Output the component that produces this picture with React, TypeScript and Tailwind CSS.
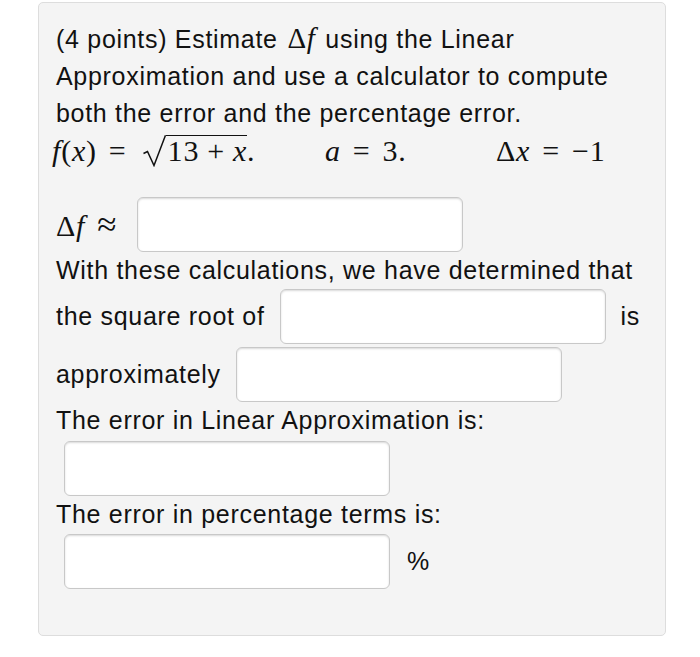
import type { ReactNode } from 'react'

const serif = "font-['Liberation_Serif','Times_New_Roman',serif] tracking-[0.8px]"

function Var({ children }: { children: ReactNode }) {
  return <span className="italic">{children}</span>
}

function Op({ children, wide = true }: { children: ReactNode; wide?: boolean }) {
  return <span className={wide ? 'mx-[12px]' : 'mx-[8px]'}>{children}</span>
}

function Sqrt({ children }: { children: ReactNode }) {
  return (
    <span className="relative ml-[3px] inline-block pl-[24px]">
      <svg
        className="absolute left-0 top-[2px] h-[33px] w-[24px]"
        viewBox="0 0 24 33"
        fill="none"
        stroke="currentColor"
      >
        <path d="M1.5 19.5 L5.5 17.5 L12 31.5 L23.5 1.2" strokeWidth="1.5" strokeLinejoin="miter" />
      </svg>
      <span className="inline-block border-t-[1.5px] border-current pl-[2px] leading-[30px]">{children}</span>
    </span>
  )
}

function Field({ className = '' }: { className?: string }) {
  return (
    <input
      type="text"
      className={`h-[55px] w-[326px] shrink-0 rounded-[6px] border border-[#c8c8c8] bg-white shadow-[inset_0_1px_2px_rgba(0,0,0,0.15)] outline-none ${className}`}
    />
  )
}

export default function App() {
  return (
    <div className="min-h-screen bg-white pl-[38px] pt-[2px] font-['Liberation_Sans',Arial,sans-serif] text-[#111]">
      <div className="w-[628px] rounded-[5px] border border-[#dddddd] bg-[#f4f4f4] pb-[46px] pl-[17px] pr-[14px] pt-[17px] text-[25px] leading-[37px] tracking-[0.7px]">
        <p>
          (4 points) Estimate{' '}
          <span className={`${serif} mx-[2px] text-[29px]`}>
            Δ<Var>f</Var>
          </span>{' '}
          using the Linear Approximation and use a calculator to compute both the error and the percentage error.
        </p>

        {/* f(x), a and Δx */}
        <div className={`${serif} -ml-[4px] flex items-baseline text-[30px]`}>
          <span className="w-[273px]">
            <Var>f</Var>(<Var>x</Var>)<Op>=</Op>
            <Sqrt>
              13<Op wide={false}>+</Op>
              <Var>x</Var>
            </Sqrt>
            .
          </span>
          <span className="w-[171px]">
            <Var>a</Var>
            <Op>=</Op>3.
          </span>
          <span>
            Δ<Var>x</Var>
            <Op>=</Op>−1
          </span>
        </div>

        <div className="mt-[28px] flex items-center gap-[20px]">
          <span className={`${serif} text-[30px]`}>
            Δ<Var>f</Var>
            <span className="ml-[12px] text-[35px]">≈</span>
          </span>
          <Field />
        </div>

        <p>With these calculations, we have determined that</p>
        <div className="flex items-center gap-[15px]">
          <span>the square root of</span>
          <Field className="w-[324px]" />
          <span>is</span>
        </div>
        <div className="mt-[3px] flex items-center gap-[15px]">
          <span>approximately</span>
          <Field />
        </div>

        <p>The error in Linear Approximation is:</p>
        <Field className="ml-[8px] mt-[2px] block" />

        <p>The error in percentage terms is:</p>
        <div className="mt-[1px] flex items-center gap-[17px] pl-[8px]">
          <Field />
          <span>%</span>
        </div>
      </div>
    </div>
  )
}
